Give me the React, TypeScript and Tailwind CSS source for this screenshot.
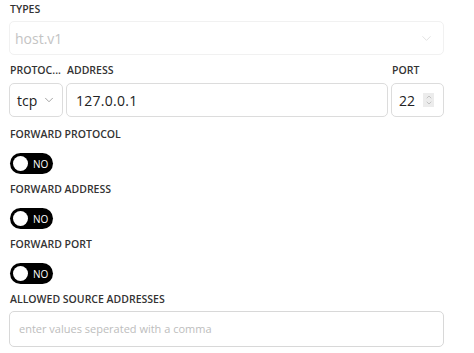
import { ChevronDown, ChevronUp } from 'lucide-react';

// Small uppercase field label
const Label = ({ text, className = '' }: { text: string; className?: string }) => (
    <div className={`text-[10.5px] leading-4 font-semibold text-[#333] uppercase ${className}`}>{text}</div>
);

// Black "NO" toggle switch
const Toggle = ({ className = '' }: { className?: string }) => (
    <div className={`flex items-center w-[43px] h-[21px] rounded-full bg-black pl-[3px] ${className}`}>
        <span className="w-[15px] h-[15px] rounded-full bg-white" />
        <span className="ml-[5px] text-[10px] font-medium text-white leading-none">NO</span>
    </div>
);

const App = () => {
    return (
        <div className="w-[474px] h-[353px] bg-white px-[9px] pt-[1px] overflow-hidden" style={{ fontFamily: '"Open Sans", "Noto Sans", sans-serif' }}>
            <div className="w-[435px] flex flex-col">
                {/* Types */}
                <Label text="Types" className="ml-[1px]" />
                <div className="mt-[4px] h-[34px] rounded-[5px] border border-[#f1f1f1] flex items-center justify-between pl-[5px] pr-[9px]">
                    <span className="text-[14px] text-[#c4c4c4]">host.v1</span>
                    <ChevronDown size={15} strokeWidth={1.2} color="#d8d8d8" />
                </div>

                {/* Protocol / address / port */}
                <div className="mt-[7px] flex gap-[3px]">
                    <div className="w-[54px] flex flex-col">
                        <Label text="Protoc..." className="whitespace-nowrap ml-[1px]" />
                        <div className="mt-[5px] h-[34px] rounded-[5px] border border-[#dcdcdc] flex items-center justify-between pl-[7px] pr-[6px]">
                            <span className="text-[14px] text-[#222]">tcp</span>
                            <ChevronDown size={14} strokeWidth={1.3} color="#888" />
                        </div>
                    </div>
                    <div className="flex-1 flex flex-col">
                        <Label text="Address" className="ml-[1px]" />
                        <div className="mt-[5px] h-[34px] rounded-[5px] border border-[#dcdcdc] flex items-center pl-[9px]">
                            <span className="text-[14px] text-[#222] tracking-[0.02em]">127.0.0.1</span>
                        </div>
                    </div>
                    <div className="w-[53px] flex flex-col">
                        <Label text="Port" className="ml-[1px]" />
                        <div className="mt-[5px] h-[34px] rounded-[5px] border border-[#dcdcdc] flex items-center justify-between pl-[7px] pr-[9px]">
                            <span className="text-[14px] text-[#222]">22</span>
                            <span className="w-[11px] h-[14px] bg-[#ececec] flex flex-col items-center justify-center">
                                <ChevronUp size={8} strokeWidth={1.5} color="#999" className="-mb-[1px]" />
                                <ChevronDown size={8} strokeWidth={1.5} color="#999" className="-mt-[1px]" />
                            </span>
                        </div>
                    </div>
                </div>

                {/* Forward toggles */}
                <Label text="Forward protocol" className="mt-[9px] ml-[1px]" />
                <Toggle className="mt-[11px] ml-[1px]" />
                <Label text="Forward address" className="mt-[7px] ml-[1px]" />
                <Toggle className="mt-[11px] ml-[1px]" />
                <Label text="Forward port" className="mt-[7px] ml-[1px]" />
                <Toggle className="mt-[11px] ml-[1px]" />

                {/* Allowed source addresses */}
                <Label text="Allowed source addresses" className="mt-[7px] ml-[1px]" />
                <div className="mt-[4px] h-[36px] rounded-[5px] border border-[#d8d8d8] flex items-center pl-[9px]">
                    <span className="text-[11px] text-[#bdbdbd]">enter values seperated with a comma</span>
                </div>
            </div>
        </div>
    );
};

export default App;
